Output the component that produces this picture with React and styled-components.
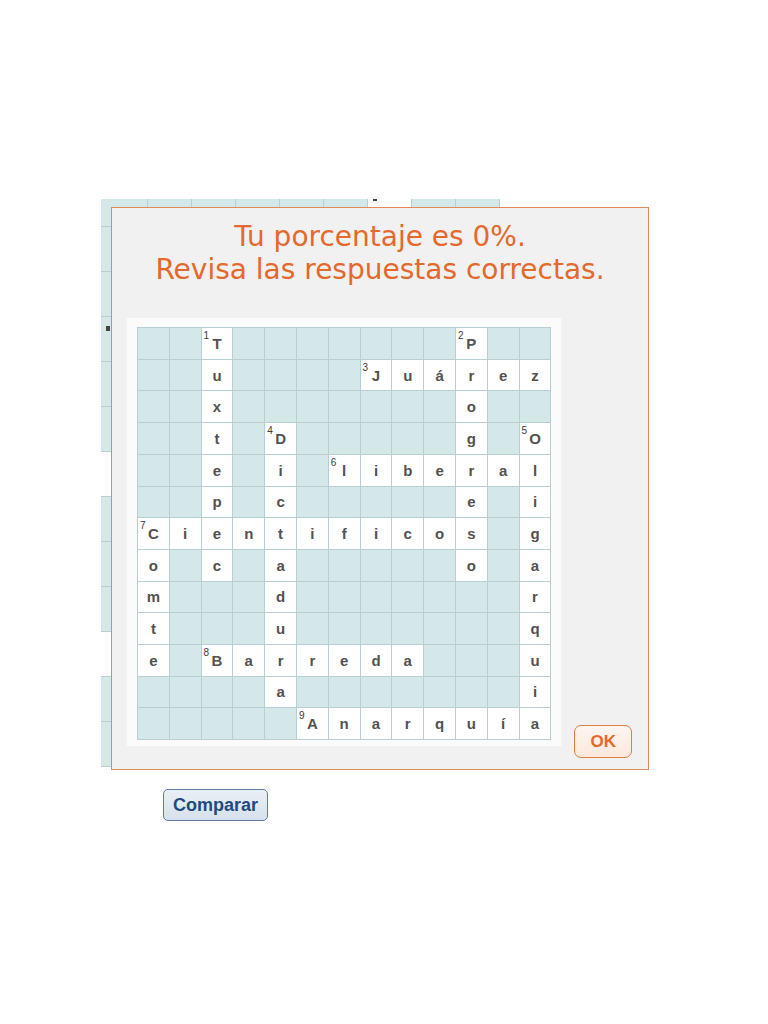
import React from "react";
import styled, { createGlobalStyle } from "styled-components";

const ORANGE = "#e4692c";
const CELL_BLUE = "#d4e7e9";
const LINE = "#b7cfd2";

const GlobalStyle = createGlobalStyle`
  html, body {
    margin: 0;
    padding: 0;
    background: #ffffff;
  }
  body {
    font-family: "DejaVu Sans", Verdana, sans-serif;
  }
`;

const Page = styled.div`
  width: 768px;
  height: 1024px;
  padding: 199px 0 0 101px;
  box-sizing: border-box;
`;

const Stage = styled.div`
  position: relative;
  width: 548px;
  height: 571px;
`;

// the exercise crossword that sits behind the result dialog
const Backdrop = styled.div`
  display: grid;
  grid-template-columns: 47px repeat(8, 44px);
  grid-template-rows: 28px repeat(12, 45px);
  width: 399px;
  height: 571px;
  overflow: hidden;
`;

const BackCell = styled.div`
  background: ${(p) => (p.open ? "#ffffff" : CELL_BLUE)};
  border-right: 1px solid ${LINE};
  border-bottom: 1px solid ${LINE};
  box-sizing: border-box;
  position: relative;
`;

const BackMark = styled.span`
  position: absolute;
  left: ${(p) => p.left}px;
  top: ${(p) => p.top}px;
  width: 4px;
  height: ${(p) => p.h}px;
  background: #444;
`;

const Dialog = styled.div`
  position: absolute;
  left: 10px;
  top: 8px;
  width: 538px;
  height: 563px;
  box-sizing: border-box;
  background: #f1f1f1;
  border: 1px solid #e28956;
  display: flex;
  flex-direction: column;
`;

const Title = styled.div`
  margin-top: 12px;
  text-align: center;
  color: ${ORANGE};
  font-family: "DejaVu Sans", Verdana, sans-serif;
  font-size: 28px;
  line-height: 33px;
`;

const Body = styled.div`
  flex: 1;
  display: flex;
  align-items: flex-end;
  gap: 13px;
  padding: 0 16px 11px 15px;
`;

const Panel = styled.div`
  background: #fbfbfb;
  padding: 9px 10px 6px 10px;
  margin-bottom: 12px;
`;

const Grid = styled.div`
  display: grid;
  grid-template-columns: repeat(13, 30.8px);
  grid-template-rows: repeat(13, 30.7px);
  gap: 1px;
  background: ${LINE};
  border: 1px solid ${LINE};
`;

const Cell = styled.div`
  position: relative;
  background: ${(p) => (p.filled ? "#ffffff" : CELL_BLUE)};
  display: flex;
  align-items: center;
  justify-content: center;
  font-family: "Liberation Sans", Arial, sans-serif;
  font-weight: bold;
  font-size: 15px;
  color: #525252;
`;

const Num = styled.span`
  position: absolute;
  left: 2px;
  top: 2px;
  font-size: 10px;
  font-weight: normal;
  color: #3a3a3a;
`;

const OkButton = styled.button`
  width: 59px;
  height: 33px;
  border: 1px solid #e37b45;
  border-radius: 7px;
  background: linear-gradient(#fef6f0, #fbe8dc);
  color: ${ORANGE};
  font-family: "Liberation Sans", Arial, sans-serif;
  font-weight: bold;
  font-size: 17px;
  padding: 0;
`;

const CompareButton = styled.button`
  margin: 19px 0 0 62px;
  width: 105px;
  height: 32px;
  border: 1px solid #5d7ea2;
  border-radius: 5px;
  background: linear-gradient(#e9eff6, #d7e1ec);
  color: #1e4b7d;
  font-family: "Liberation Sans Narrow", "Liberation Sans", Arial, sans-serif;
  font-weight: bold;
  font-size: 18px;
  padding: 0;
`;

const ROWS = [
  "..T.......P..",
  "..u....Juárez",
  "..x.......o..",
  "..t.D.....g.O",
  "..e.i.liberal",
  "..p.c.....e.i",
  "Cientificos.g",
  "o.c.a.....o.a",
  "m...d.......r",
  "t...u.......q",
  "e.Barreda...u",
  "....a.......i",
  ".....Anarquía",
];

const NUMBERS = {
  "0,2": 1,
  "0,10": 2,
  "1,7": 3,
  "3,4": 4,
  "3,12": 5,
  "4,6": 6,
  "6,0": 7,
  "10,2": 8,
  "12,5": 9,
};

const BACK_OPEN = ["0,6", "6,0", "10,0"];

const App = () => (
  <Page>
    <GlobalStyle />
    <Stage>
      <Backdrop>
        {Array.from({ length: 13 * 9 }, (_, i) => {
          const r = Math.floor(i / 9);
          const c = i % 9;
          const key = `${r},${c}`;
          return (
            <BackCell key={key} open={BACK_OPEN.includes(key)}>
              {key === "0,6" && <BackMark left={5} top={0} h={2} />}
              {key === "3,0" && <BackMark left={5} top={9} h={5} />}
            </BackCell>
          );
        })}
      </Backdrop>
      <Dialog>
        <Title>
          Tu porcentaje es 0%.
          <br />
          Revisa las respuestas correctas.
        </Title>
        <Body>
          <Panel>
            <Grid>
              {ROWS.map((row, r) =>
                Array.from(row).map((ch, c) => {
                  const n = NUMBERS[`${r},${c}`];
                  const filled = ch !== ".";
                  return (
                    <Cell key={`${r}-${c}`} filled={filled}>
                      {n && <Num>{n}</Num>}
                      {filled ? ch : ""}
                    </Cell>
                  );
                })
              )}
            </Grid>
          </Panel>
          <OkButton>OK</OkButton>
        </Body>
      </Dialog>
    </Stage>
    <CompareButton>Comparar</CompareButton>
  </Page>
);

export default App;
